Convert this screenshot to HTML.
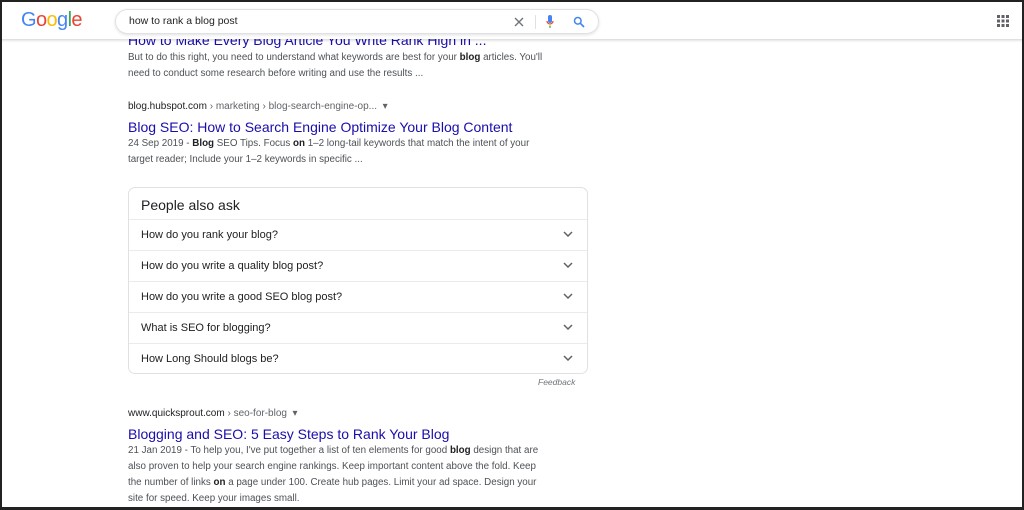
<!DOCTYPE html>
<html><head><meta charset="utf-8"><style>
*{margin:0;padding:0;box-sizing:border-box}
body{width:1024px;height:510px;overflow:hidden;background:#fff;font-family:"Liberation Sans",Arial,sans-serif;position:relative}
.frame{position:absolute;inset:0;border:2px solid #222;border-bottom:3px solid #222;pointer-events:none;z-index:10}
.hdr{position:absolute;left:0;top:0;width:1024px;height:39px;background:#fff;box-shadow:0 1px 3px rgba(0,0,0,.2);z-index:5}
.logo{position:absolute;left:21px;top:9px;font-size:20px;letter-spacing:-0.6px}
.sb{position:absolute;left:115px;top:9px;width:484px;height:25px;border:1px solid #dfe1e5;border-radius:13px;box-shadow:0 1px 3px rgba(0,0,0,.12)}
.sb span{position:absolute;left:13px;top:5px;font-size:10.5px;color:#222}
.a{position:absolute;white-space:nowrap}
.url{font-size:10px;color:#202124}
.url i{font-style:normal;color:#5f6368}
.t{font-size:14px;color:#1a0dab}
.s{font-size:9.8px;color:#4d5156;line-height:16px}
.s b{color:#202124}
.paa{position:absolute;left:128px;top:187px;width:460px;height:187px;border:1px solid #dfe1e5;border-radius:7px}
.paa h3{font-weight:normal;font-size:14px;color:#202124;position:absolute;left:12px;top:9px}
.row{position:absolute;left:0;width:458px;height:31px;border-top:1px solid #ebebeb;font-size:11px;color:#202124}
.row span{position:absolute;left:12px;top:9px}
.row svg{position:absolute;right:14px;top:11px}
</style></head><body>
<div class="hdr">
<div class="logo"><span style="color:#4285f4">G</span><span style="color:#ea4335">o</span><span style="color:#fbbc05">o</span><span style="color:#4285f4">g</span><span style="color:#34a853">l</span><span style="color:#ea4335">e</span></div>
<div class="sb"><span>how to rank a blog post</span>
<svg style="position:absolute;left:398px;top:7px" width="10" height="10" viewBox="0 0 10 10"><path d="M1 1L9 9M9 1L1 9" stroke="#70757a" stroke-width="1.4"/></svg>
<div style="position:absolute;left:419px;top:5px;width:1px;height:14px;background:#dfe1e5"></div>
<svg style="position:absolute;left:430px;top:5px" width="8" height="14" viewBox="0 0 8 14"><rect x="2" y="0" width="4" height="8" rx="2" fill="#4285f4"/><path d="M1 6a3 3 0 006 0" stroke="#ea4335" stroke-width="1.2" fill="none"/><rect x="3.4" y="9" width="1.2" height="3" fill="#fbbc05"/><rect x="3.4" y="11" width="1.2" height="2" fill="#34a853"/></svg>
<svg style="position:absolute;left:457px;top:6px" width="12" height="12" viewBox="0 0 12 12"><circle cx="4.8" cy="4.8" r="3.3" stroke="#4285f4" stroke-width="1.5" fill="none"/><path d="M7.3 7.3L11 11" stroke="#4285f4" stroke-width="1.7"/></svg>
</div>
<svg style="position:absolute;left:997px;top:15px" width="12" height="12" viewBox="0 0 12 12" fill="#5f6368"><rect x="0" y="0" width="3" height="3"/><rect x="4.5" y="0" width="3" height="3"/><rect x="9" y="0" width="3" height="3"/><rect x="0" y="4.5" width="3" height="3"/><rect x="4.5" y="4.5" width="3" height="3"/><rect x="9" y="4.5" width="3" height="3"/><rect x="0" y="9" width="3" height="3"/><rect x="4.5" y="9" width="3" height="3"/><rect x="9" y="9" width="3" height="3"/></svg>
</div>
<div class="a t" style="left:128px;top:32px">How to Make Every Blog Article You Write Rank High in ...</div>
<div class="a s" style="left:128px;top:50px">But to do this right, you need to understand what keywords are best for your <b>blog</b> articles. You'll<br>need to conduct some research before writing and use the results ...</div>
<div class="a url" style="left:128px;top:101px">blog.hubspot.com <i>› marketing › blog-search-engine-op... &nbsp;▾</i></div>
<div class="a t" style="left:128px;top:119px">Blog SEO: How to Search Engine Optimize Your Blog Content</div>
<div class="a s" style="left:128px;top:136px">24 Sep 2019 - <b>Blog</b> SEO Tips. Focus <b>on</b> 1–2 long-tail keywords that match the intent of your<br>target reader; Include your 1–2 keywords in specific ...</div>
<div class="paa"><h3>People also ask</h3>
<div class="row" style="top:31px"><span>How do you rank your blog?</span><svg width="10" height="6" viewBox="0 0 10 6"><path d="M1 1l4 4 4-4" stroke="#5f6368" stroke-width="1.5" fill="none"/></svg></div>
<div class="row" style="top:62px"><span>How do you write a quality blog post?</span><svg width="10" height="6" viewBox="0 0 10 6"><path d="M1 1l4 4 4-4" stroke="#5f6368" stroke-width="1.5" fill="none"/></svg></div>
<div class="row" style="top:93px"><span>How do you write a good SEO blog post?</span><svg width="10" height="6" viewBox="0 0 10 6"><path d="M1 1l4 4 4-4" stroke="#5f6368" stroke-width="1.5" fill="none"/></svg></div>
<div class="row" style="top:124px"><span>What is SEO for blogging?</span><svg width="10" height="6" viewBox="0 0 10 6"><path d="M1 1l4 4 4-4" stroke="#5f6368" stroke-width="1.5" fill="none"/></svg></div>
<div class="row" style="top:155px"><span>How Long Should blogs be?</span><svg width="10" height="6" viewBox="0 0 10 6"><path d="M1 1l4 4 4-4" stroke="#5f6368" stroke-width="1.5" fill="none"/></svg></div>
</div>
<div class="a" style="left:538px;top:377px;font-size:8.5px;font-style:italic;color:#70757a">Feedback</div>
<div class="a url" style="left:128px;top:408px">www.quicksprout.com <i>› seo-for-blog &nbsp;▾</i></div>
<div class="a t" style="left:128px;top:426px">Blogging and SEO: 5 Easy Steps to Rank Your Blog</div>
<div class="a s" style="left:128px;top:443px">21 Jan 2019 - To help you, I've put together a list of ten elements for good <b>blog</b> design that are<br>also proven to help your search engine rankings. Keep important content above the fold. Keep<br>the number of links <b>on</b> a page under 100. Create hub pages. Limit your ad space. Design your<br>site for speed. Keep your images small.</div>
<div class="frame"></div>
</body></html>
